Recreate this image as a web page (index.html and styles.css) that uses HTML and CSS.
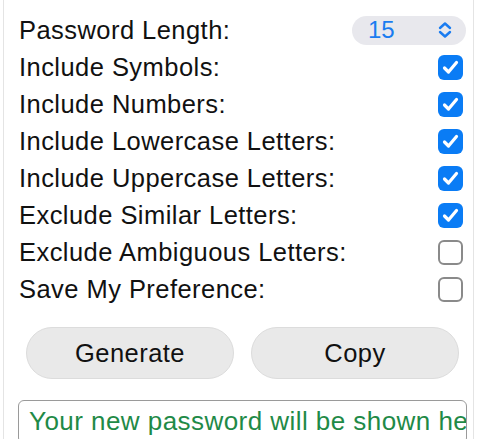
FILE: index.html
```html
<!DOCTYPE html>
<html>
<head>
<meta charset="utf-8">
<link rel="stylesheet" href="styles.css">
</head>
<body>
<div class="panel">
  <div class="row">
    <span class="label">Password Length:</span>
    <div class="select">
      <span class="select-value">15</span>
      <svg class="chev" width="16" height="18" viewBox="0 0 16 18"><path d="M3 7 L8 2.5 L13 7 M3 11 L8 15.5 L13 11" fill="none" stroke="#1a7cf0" stroke-width="2.4" stroke-linecap="round" stroke-linejoin="round"/></svg>
    </div>
  </div>
  <div class="row"><span class="label">Include Symbols:</span><span class="box on"><svg width="25" height="25" viewBox="0 0 25 25"><path d="M6.5 13 L10.5 17 L18.5 7.5" fill="none" stroke="#fff" stroke-width="3.2" stroke-linecap="round" stroke-linejoin="round"/></svg></span></div>
  <div class="row"><span class="label">Include Numbers:</span><span class="box on"><svg width="25" height="25" viewBox="0 0 25 25"><path d="M6.5 13 L10.5 17 L18.5 7.5" fill="none" stroke="#fff" stroke-width="3.2" stroke-linecap="round" stroke-linejoin="round"/></svg></span></div>
  <div class="row"><span class="label">Include Lowercase Letters:</span><span class="box on"><svg width="25" height="25" viewBox="0 0 25 25"><path d="M6.5 13 L10.5 17 L18.5 7.5" fill="none" stroke="#fff" stroke-width="3.2" stroke-linecap="round" stroke-linejoin="round"/></svg></span></div>
  <div class="row"><span class="label">Include Uppercase Letters:</span><span class="box on"><svg width="25" height="25" viewBox="0 0 25 25"><path d="M6.5 13 L10.5 17 L18.5 7.5" fill="none" stroke="#fff" stroke-width="3.2" stroke-linecap="round" stroke-linejoin="round"/></svg></span></div>
  <div class="row"><span class="label">Exclude Similar Letters:</span><span class="box on"><svg width="25" height="25" viewBox="0 0 25 25"><path d="M6.5 13 L10.5 17 L18.5 7.5" fill="none" stroke="#fff" stroke-width="3.2" stroke-linecap="round" stroke-linejoin="round"/></svg></span></div>
  <div class="row"><span class="label">Exclude Ambiguous Letters:</span><span class="box off"></span></div>
  <div class="row"><span class="label">Save My Preference:</span><span class="box off"></span></div>
  <div class="buttons">
    <button class="btn">Generate</button>
    <button class="btn">Copy</button>
  </div>
  <div class="output">Your new password will be shown here</div>
</div>
</body>
</html>
```
FILE: styles.css
```css
html, body {
  margin: 0;
  padding: 0;
  background: #fff;
  overflow: hidden;
}
body {
  font-family: "Liberation Sans", Arial, sans-serif;
  color: #111;
}
.panel {
  margin-left: 3px;
  width: 471px;
  height: 439px;
  border-left: 1px solid #e4e4e4;
  border-right: 1px solid #e4e4e4;
  padding: 12px 7px 0 15px;
  box-sizing: border-box;
}
.row {
  display: flex;
  align-items: center;
  justify-content: space-between;
  height: 37px;
}
.label {
  font-size: 25.5px;
  letter-spacing: 0.45px;
}
.select {
  display: flex;
  align-items: center;
  justify-content: space-between;
  width: 114px;
  height: 29px;
  box-sizing: border-box;
  padding: 0 13px 0 16px;
  background: #e8e8ed;
  border-radius: 15px;
  margin-top: -1px;
}
.select-value {
  color: #1a7cf0;
  font-size: 24px;
}
.chev {
  display: block;
}
.box {
  width: 25px;
  height: 25px;
  border-radius: 6px;
  box-sizing: border-box;
  margin-right: 3px;
  display: block;
}
.box svg { display: block; }
.box.on {
  background: #0a7cf5;
}
.box.off {
  border: 2px solid #8a8a8a;
  background: #fff;
}
.buttons {
  display: flex;
  gap: 17px;
  margin: 19px 0 0 7px;
}
.btn {
  width: 208px;
  height: 52px;
  border-radius: 26px;
  border: 1px solid #dcdcdc;
  background: #e9e9e9;
  font-family: "Liberation Sans", Arial, sans-serif;
  font-size: 25.5px;
  color: #111;
  padding: 0;
  letter-spacing: 0.45px;
}
.output {
  margin: 21px 0 0 -1px;
  width: 449px;
  height: 44px;
  box-sizing: border-box;
  border: 1px solid #9a9a9a;
  border-radius: 6px;
  padding: 5px 0 0 10px;
  font-size: 26px;
  letter-spacing: 0.45px;
  color: #1f8a47;
  white-space: nowrap;
  overflow: hidden;
}
```
